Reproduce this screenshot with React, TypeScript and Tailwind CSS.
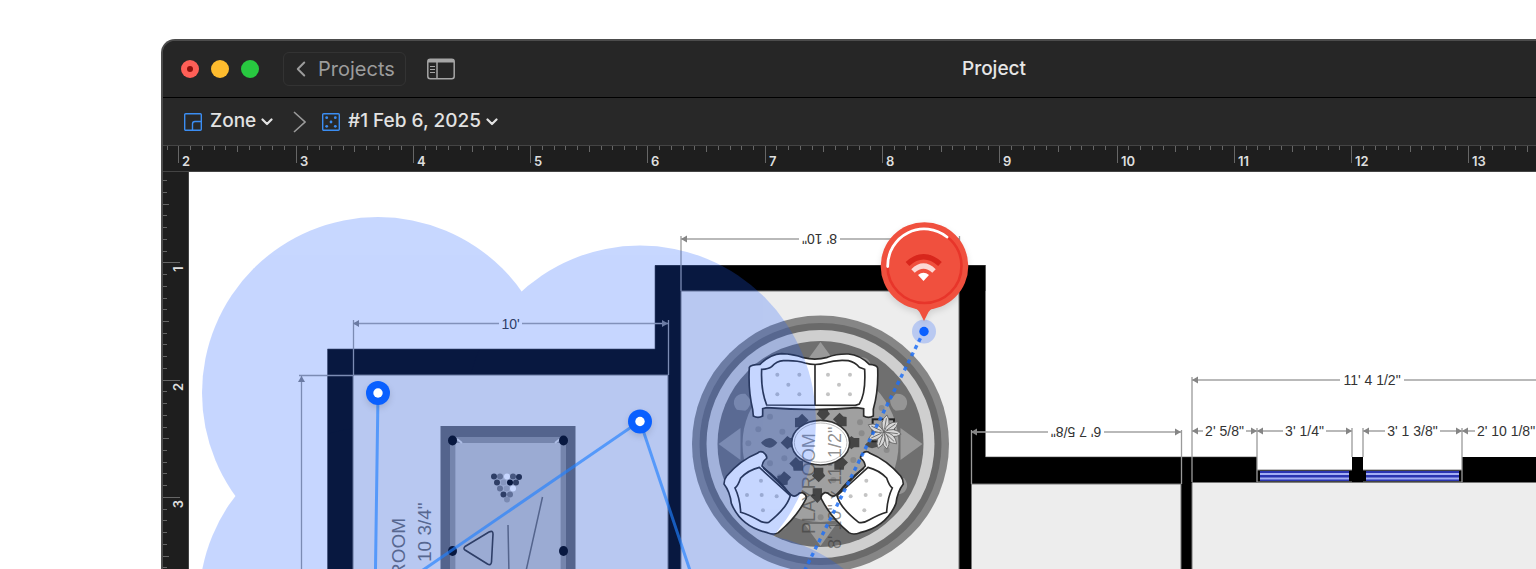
import { ChevronLeft } from "lucide-react";

const RULER_STEP = 11.727;

const topTicks = Array.from({ length: 118 }, (_, i) => i - 1);
const sideTicks = Array.from({ length: 80 }, (_, i) => i - 7);

const tickLength = (n: number) => (n % 10 === 0 ? 17 : n % 5 === 0 ? 6 : 4);

function TopRuler() {
  return (
    <div className="h-[27px] border-y border-[#444444] bg-[#1e1e1e]">
      <svg className="h-[25px] w-full" fontSize="13" fontWeight="600" fill="#dedede">
        {topTicks.map((n) => {
          const x = Math.round(15.4 + n * RULER_STEP);
          return (
            <g key={n}>
              <rect x={x} y="0" width="1" height={tickLength(n)} fill="#666666" />
              {n % 10 === 0 && (
                <text x={x + 4} y="20">
                  {n / 10 + 2}
                </text>
              )}
            </g>
          );
        })}
      </svg>
    </div>
  );
}

function SideRuler() {
  return (
    <svg
      className="w-[26px] shrink-0 border-r border-[#444444] bg-[#1e1e1e]"
      fontSize="13"
      fontWeight="600"
      fill="#dedede"
    >
      {sideTicks.map((n) => {
        const y = Math.round(90.4 + n * RULER_STEP);
        return (
          <g key={n}>
            <rect x="0" y={y} width={tickLength(n)} height="1" fill="#666666" />
            {n % 10 === 0 && (
              <text transform={`translate(20 ${y + 7}) rotate(-90)`} textAnchor="middle">
                {n / 10 + 1}
              </text>
            )}
          </g>
        );
      })}
    </svg>
  );
}

function Arrow({ x, y, dir }: { x: number; y: number; dir: 1 | -1 }) {
  return <path d={`M${x} ${y}l${6 * dir} -3.5v7z`} fill="#858585" />;
}

type DimensionProps = {
  x1: number;
  x2: number;
  y: number;
  gap: [number, number];
  label: string;
  flip?: boolean;
  open?: boolean;
};

// horizontal measurement line, label in the gap
function Dimension({ x1, x2, y, gap, label, flip, open }: DimensionProps) {
  const cx = (gap[0] + gap[1]) / 2;
  return (
    <g>
      <path d={`M${x1} ${y}H${gap[0]}M${gap[1]} ${y}H${x2}`} stroke="#a3a3a3" strokeWidth="1.3" />
      <Arrow x={x1} y={y} dir={1} />
      {!open && <Arrow x={x2} y={y} dir={-1} />}
      <text
        transform={`translate(${cx} ${y}) rotate(${flip ? 180 : 0})`}
        y="5"
        textAnchor="middle"
        fontSize="14"
        fill="#333"
      >
        {label}
      </text>
    </g>
  );
}

function Walls() {
  return (
    <g>
      <path d="M353 375H668V900H353zM681 291H959V900H681zM971 484H1181V900H971zM1192 482H2600V900H1192z" fill="#ededed" />
      <path
        fillRule="evenodd"
        d="M327.500 349H655V265H985.500V457H2600V482H1192V900H1181V484H971.500V900H959V291H681V900H668V375H353V900H327.500z"
        fill="#000"
      />
      <path d="M353 900V375H668V900M681 900V291H959V900M971.500 900V484H1181V900M1192 900V482.500H2600" fill="none" stroke="#777" strokeWidth="1" />
      <path d="M985.500 291V265.500H655V349H327.500V900M985.500 457H1257" fill="none" stroke="#444" strokeWidth="0.6" />
      <Opening x={1257} width={95} />
      <Opening x={1363} width={99} />
    </g>
  );
}

function Opening({ x, width }: { x: number; width: number }) {
  return (
    <g>
      <rect x={x} y="456" width={width} height="26" fill="#fff" />
      <rect x={x} y="470" width={width} height="12" fill="#000" />
      <rect x={x + 3} y="471" width={width - 6} height="10" fill="#2a35b0" />
      <path d={`M${x + 3} 474h${width - 6}M${x + 3} 478.500h${width - 6}`} stroke="#a3aff3" strokeWidth="2.200" />
      <path d={`M${x} 470h${width}M${x} 482h${width}`} stroke="#888" />
    </g>
  );
}

function Dimensions() {
  return (
    <g>
      <path
        d="M353.500 320V375M668.500 320V375M299 375.500H353M301.500 376V900M681 236V291M959.500 236V291M971.500 430V484M1181.500 430V484M1192 377V482M1257 428V482M1352 428V457M1363 428V457M1462 428V482"
        fill="none"
        stroke="#9a9a9a"
        strokeWidth="1.3"
      />
      <path d="M301.500 376l-3.500 6h7z" fill="#858585" />
      <Dimension x1={353} x2={668} y={323.5} gap={[499, 522]} label="10'" />
      <Dimension x1={681} x2={959} y={239} gap={[799, 840]} label={`8' 10"`} flip />
      <Dimension x1={971} x2={1181} y={432} gap={[1048, 1104]} label={`6' 7 5/8"`} flip />
      <Dimension x1={1192} x2={2600} y={380} gap={[1340, 1404]} label={`11' 4 1/2"`} open />
      <Dimension x1={1192} x2={1257} y={431} gap={[1203, 1246]} label={`2' 5/8"`} />
      <Dimension x1={1257} x2={1352} y={431} gap={[1283, 1326]} label={`3' 1/4"`} />
      <Dimension x1={1363} x2={1462} y={431} gap={[1385, 1440]} label={`3' 1 3/8"`} />
      <Dimension x1={1462} x2={1606} y={431} gap={[1475, 1537]} label={`2' 10 1/8"`} open />
    </g>
  );
}

const balls: [number, number, string][] = [
  [494, 476.5, "#333"], [500, 476.5, "#777"], [507, 476.5, "#fff"], [513, 476.5, "#555"], [519, 477, "#222"],
  [497, 482.5, "#333"], [503.5, 482.5, "#aaa"], [510, 482.5, "#000"], [516, 482.5, "#333"],
  [500, 488.5, "#777"], [506.5, 488.5, "#aaa"], [513, 488.5, "#fff"],
  [503.5, 494.5, "#333"], [510, 494.5, "#777"],
  [507, 499.5, "#999"],
];

function PoolTable() {
  return (
    <g>
      <rect x="440.500" y="426" width="135" height="474" fill="#676767" />
      <rect x="450" y="437" width="116" height="463" fill="#929292" />
      <rect x="455" y="443" width="106" height="457" fill="#c5c5c5" />
      <path d="M455.500 900V443M560.500 900V443" stroke="#b2b2b2" strokeWidth="1" />
      <path d="M457 439l5 4M560 439l-5 4" stroke="#ddd" strokeWidth="2" />
      {[440.5, 551].map((y) => (
        <g key={y}>
          <ellipse cx="452.500" cy={y} rx="4.500" ry="5" />
          <ellipse cx="563.500" cy={y} rx="4.500" ry="5" />
        </g>
      ))}
      {balls.map(([x, y, fill]) => (
        <circle key={`${x}-${y}`} cx={x} cy={y} r="3" fill={fill} />
      ))}
      <path d="M465 546.500L489 532Q493 530 493 534L491.500 562Q491 566 487.500 564L465 550Q463 548.500 465 546.500z" fill="none" stroke="#333" strokeWidth="1.600" />
      <path d="M508 525L509.500 600M542.500 497L524 580" stroke="#666" strokeWidth="1.500" />
    </g>
  );
}

function Armchair() {
  return (
    <g stroke="#2b2b2b" strokeWidth="5">
      <path
        d="M132 312Q132 298 140 288Q182 240 232 220Q240 212 250 217Q262 226 260 235Q248 243 246 258L334 345Q345 352 353 344Q358 337 368 338Q382 345 378 357Q350 412 295 458Q282 466 262 458Q182 440 154 370Q150 335 132 312z"
        fill="#fff"
      />
      <path
        d="M165 324Q174 318 182 294Q205 270 238 262L331 347Q320 385 266 427Q250 430 235 420Q205 404 182 397Q180 355 165 324zM250 264Q300 300 330 344"
        fill="none"
      />
      <g fill="#c4c4c4" stroke="none">
        <circle cx="243" cy="302" r="6" />
        <circle cx="201" cy="345" r="6" />
        <circle cx="245" cy="345" r="6" />
        <circle cx="290" cy="349" r="6" />
        <circle cx="249" cy="391" r="6" />
      </g>
    </g>
  );
}

function Sofa() {
  return (
    <g stroke="#2b2b2b" strokeWidth="5">
      <path
        d="M40 228L38 208Q24 150 28 82Q32 74 60 73Q90 43 125 41Q160 42 190 53Q226 62 262 52Q290 41 325 42Q360 45 388 73Q410 74 413 84Q416 150 400 208V228Q385 236 371 228V206L350 203Q226 214 80 203L68 206V228Q54 236 40 228z"
        fill="#fff"
      />
      <path
        d="M80 195Q62 150 65 88Q85 88 95 80Q110 63 130 62Q170 60 195 69Q226 78 255 69Q290 58 325 62Q345 66 358 82L374 88Q378 160 358 192L346 196zM225 74V194"
        fill="none"
      />
      <g fill="#c4c4c4" stroke="none">
        {[112, 178, 264, 330].map((x) => (
          <g key={x}>
            <circle cx={x} cy="104" r="6" />
            <circle cx={x} cy="163" r="6" />
          </g>
        ))}
        <circle cx="145" cy="134" r="6" />
        <circle cx="297" cy="134" r="6" />
      </g>
    </g>
  );
}

const quarterTurns = [0, 90, 180, 270];
const diagonalTurns = [28, 62, 118, 152, 208, 242, 298, 332];
const leafTurns = [10, 55, 97, 133, 170, 200, 245, 295];
const freckles: [number, number][] = [
  [235, 148], [307, 155], [205, 190], [313, 235], [270, 110], [540, 127], [545, 160], [605, 84],
  [590, 250], [460, 300], [422, 412], [300, 290], [620, 210], [520, 240], [270, 250],
];
const spikes: [number, number, number][] = [
  [362, 125, 45], [430, 98, 0], [483, 122, -45], [326, 188, 90], [518, 188, 90],
  [352, 255, -45], [416, 283, 0], [480, 252, 45], [310, 298, 40], [412, 345, 0],
];

function Rug() {
  return (
    <g>
      <g transform="translate(820.500 444)">
        <circle r="128.500" fill="#868686" />
        <circle r="121" fill="#6a6a6a" />
        <circle r="114" fill="#cfcfcf" />
        <circle r="103" fill="#6f6f6f" />
        <circle r="78" fill="#a0a0a0" />
        {quarterTurns.map((a) => (
          <path key={a} d="M0 -102L16 -80H-16z" fill="#9a9a9a" transform={`rotate(${a})`} />
        ))}
        {diagonalTurns.map((a) => (
          <path key={a} d="M-9 -90Q-6 -97 0 -97Q6 -97 9 -90L6 -82Q0 -79 -6 -82z" fill="#959595" transform={`rotate(${a})`} />
        ))}
      </g>
      <g transform="translate(680 380) scale(0.3333)">
        {freckles.map(([x, y]) => (
          <circle key={`${x}-${y}`} cx={x} cy={y} r="9" fill="#8b8b8b" />
        ))}
        <path d="M243 188Q268 160 292 188Q268 218 243 188zM555 195Q575 170 600 195Q575 215 555 195z" fill="#4d4d4d" />
        {spikes.map(([x, y, a]) => (
          <path key={`${x}-${y}`} d="M-14 -20H14V-4L20 4L0 24L-20 4L-14 -4z" fill="#454545" transform={`translate(${x} ${y}) rotate(${a})`} />
        ))}
        <ellipse cx="422" cy="188" rx="87" ry="67" fill="#fff" stroke="#333" strokeWidth="5" />
        <ellipse cx="422" cy="188" rx="79" ry="59" fill="none" stroke="#bbb" strokeWidth="3" />
        <Armchair />
        <g transform="translate(802 0) scale(-1 1)">
          <Armchair />
        </g>
        <rect x="578" y="118" width="64" height="66" fill="none" stroke="#222" strokeWidth="6" />
        {leafTurns.map((a) => (
          <path key={a} d="M0 0Q-21 -28 0 -52Q21 -28 0 0zM0 -8V-42" fill="#d8d8d8" stroke="#666" strokeWidth="2.500" transform={`translate(612 156) rotate(${a})`} />
        ))}
      </g>
      <g transform="translate(740 340) scale(0.3333)">
        <Sofa />
      </g>
      <g fontSize="18" fill="#333" fillOpacity="0.55">
        <text transform="translate(815 534) rotate(-90)">PLAYROOM</text>
        <text transform="translate(841 549) rotate(-90)">{`8' 10" x 11' 1/2"`}</text>
      </g>
    </g>
  );
}

// accent-tinted scan coverage, one disc around each survey point
function Coverage() {
  return (
    <g opacity="0.25" fill="#205fff">
      <circle cx="378" cy="393" r="176" />
      <circle cx="640" cy="421.500" r="176" />
      <circle cx="375" cy="603" r="176" />
      <circle cx="736" cy="708" r="176" />
      <path d="M378 393L640 421L736 708L375 603z" />
    </g>
  );
}

function SurveyPoint({ x, y }: { x: number; y: number }) {
  return (
    <g className="drop-shadow-md">
      <circle cx={x} cy={y} r="12" fill="#0a60ff" />
      <circle cx={x} cy={y} r="4.700" fill="#fff" />
    </g>
  );
}

function WifiPin() {
  return (
    <g>
      <circle cx="924" cy="331.500" r="12" fill="#205fff" fillOpacity="0.25" />
      <circle cx="924" cy="331.500" r="4.700" fill="#0a60ff" />
      <g className="drop-shadow-md">
        <circle cx="924.500" cy="266" r="43.800" fill="#f0503e" />
        <path d="M912 307Q919 309 921 315L924 321L927 315Q929 309 936 307z" fill="#f0503e" />
      </g>
      <circle cx="924.500" cy="266" r="37" fill="none" stroke="#e8352a" strokeWidth="2.600" />
      <path d="M887.700 266.500A36.500 37 0 0 1 947 237" fill="none" stroke="#fff" strokeWidth="2.800" strokeLinecap="round" />
      <path d="M907.500 264Q923.500 249.500 940 264" fill="none" stroke="#d8261c" strokeWidth="5.500" />
      <path d="M913 271Q923.500 261 934 271" fill="none" stroke="#fcd8d4" strokeWidth="5" />
      <path d="M918 275Q923.500 270.500 929 275L923.500 281z" fill="#fff" />
    </g>
  );
}

function FloorPlan() {
  return (
    <svg
      className="min-h-[397px] min-w-0 flex-1 bg-white font-['Liberation_Sans',sans-serif]"
      role="img"
      aria-label="Floor plan"
    >
      <g transform="translate(-189 -172)">
        <Walls />
        <Dimensions />
        <PoolTable />
        <Rug />
        <g fontSize="19" fill="#6b6b6b">
          <text transform="translate(405 577) rotate(-90)">ROOM</text>
          <text transform="translate(431 562) rotate(-90)">10 3/4"</text>
        </g>
        <Coverage />
        <path d="M375 603L378 393M375 603L640 421L736 708" fill="none" stroke="#2080ff" strokeOpacity="0.65" strokeWidth="3" />
        <path d="M924 331L736 708" stroke="#2070f5" strokeOpacity="0.85" strokeWidth="3.400" strokeDasharray="4 4" />
        <SurveyPoint x={378} y={393} />
        <SurveyPoint x={640} y={421.5} />
        <WifiPin />
      </g>
    </svg>
  );
}

function SidebarIcon() {
  return (
    <svg width="28" height="22" viewBox="0 0 28 22" fill="none" stroke="#a6a6a6">
      <rect x="0.800" y="1.300" width="26.400" height="19.400" rx="2.500" strokeWidth="1.500" />
      <path d="M1 4.500V3Q1 1 3 1H25Q27 1 27 3V4.500z" fill="#a6a6a6" stroke="none" />
      <path d="M10 4V21" strokeWidth="1.500" />
      <path d="M3 8.500H8M3 11.500H8M3 14.500H8" strokeWidth="1.200" />
    </svg>
  );
}

function ZoneIcon() {
  return (
    <svg width="18" height="18" viewBox="0 0 18 18" fill="none" stroke="#3b8df2" strokeWidth="1.400">
      <rect x="0.700" y="0.700" width="16.600" height="16.600" rx="1" />
      <path d="M8.500 17V11Q8.500 8.500 11 8.500H17" />
    </svg>
  );
}

function ScanIcon() {
  return (
    <svg width="18" height="18" viewBox="0 0 18 18" fill="#3b8df2">
      <rect x="0.700" y="0.700" width="16.600" height="16.600" rx="1" fill="none" stroke="#3b8df2" strokeWidth="1.400" />
      <circle cx="4.700" cy="4.700" r="1.400" />
      <circle cx="13.300" cy="4.700" r="1.400" />
      <circle cx="9" cy="9" r="1.400" />
      <circle cx="4.700" cy="13.300" r="1.400" />
      <circle cx="13.300" cy="13.300" r="1.400" />
    </svg>
  );
}

function Picker({ label, value }: { label: string; value: string }) {
  return (
    <div className="flex items-center gap-1">
      <select
        aria-label={label}
        className="appearance-none bg-transparent text-[19px] font-medium text-[#e2e2e2]"
        defaultValue={value}
      >
        <option>{value}</option>
      </select>
      <svg className="pointer-events-none" width="12" height="8" viewBox="0 0 12 8" fill="none" stroke="#e2e2e2" strokeWidth="2.200" strokeLinecap="round" strokeLinejoin="round">
        <path d="M1.500 1.500L6 6L10.500 1.500" />
      </svg>
    </div>
  );
}

export default function App() {
  return (
    <div className="flex min-h-screen overflow-hidden bg-white pt-[39px] pl-[161px] font-['Inter',sans-serif]">
      <div className="-mr-[289px] flex min-w-0 flex-1 flex-col overflow-hidden rounded-tl-[14px] border-t-2 border-l-2 border-[#4c4c4c] bg-[#282828]">
        <header className="grid h-[57px] grid-cols-[1fr_auto_1fr] items-center border-b border-black bg-[#262626] px-[18px]">
          <div className="flex items-center">
            <div className="flex gap-3">
              <button aria-label="Close" className="flex size-[18px] items-center justify-center rounded-full bg-[#ff5f57]">
                <span className="size-1.5 rounded-full bg-[#8f0f0a]" />
              </button>
              <button aria-label="Minimize" className="size-[18px] rounded-full bg-[#febc2e]" />
              <button aria-label="Zoom" className="size-[18px] rounded-full bg-[#28c840]" />
            </div>
            <button className="ml-6 flex h-[34px] items-center gap-1 rounded-md border border-[#333333] pr-2.5 pl-1 text-xl text-[#9c9c9c]">
              <ChevronLeft size={26} strokeWidth={1.8} />
              Projects
            </button>
            <button aria-label="Toggle sidebar" className="ml-[21px]">
              <SidebarIcon />
            </button>
          </div>
          <h1 className="text-[19px] font-medium text-[#e6e6e6]">Project</h1>
        </header>
        <nav className="flex h-[47px] items-center px-[21px]">
          <ZoneIcon />
          <div className="ml-2">
            <Picker label="Zone" value="Zone" />
          </div>
          <svg className="mr-4 ml-5" width="13" height="22" viewBox="0 0 13 22" fill="none" stroke="#9a9a9a" strokeWidth="1.600">
            <path d="M1 1L12 11L1 21" />
          </svg>
          <ScanIcon />
          <div className="ml-2">
            <Picker label="Scan" value="#1 Feb 6, 2025" />
          </div>
        </nav>
        <TopRuler />
        <main className="flex flex-1">
          <SideRuler />
          <FloorPlan />
        </main>
      </div>
    </div>
  );
}
